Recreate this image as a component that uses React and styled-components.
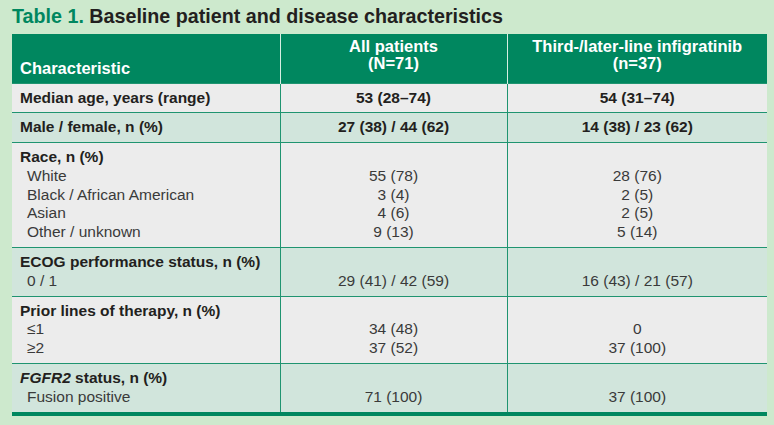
import React from 'react';
import styled, { createGlobalStyle } from 'styled-components';

const GlobalStyle = createGlobalStyle`
  html, body {
    margin: 0;
    padding: 0;
    background: #cde9cd;
  }
  body {
    font-family: "Liberation Sans", Arial, Helvetica, sans-serif;
  }
`;

const rows = [
  { label: 'Median age, years (range)', all: '53 (28–74)', third: '54 (31–74)', bold: true, tint: 'gray' },
  { label: 'Male / female, n (%)', all: '27 (38) / 44 (62)', third: '14 (38) / 23 (62)', bold: true, tint: 'green' },
  {
    label: 'Race, n (%)',
    tint: 'gray',
    items: [
      ['White', '55 (78)', '28 (76)'],
      ['Black / African American', '3 (4)', '2 (5)'],
      ['Asian', '4 (6)', '2 (5)'],
      ['Other / unknown', '9 (13)', '5 (14)'],
    ],
  },
  {
    label: 'ECOG performance status, n (%)',
    tint: 'green',
    items: [['0 / 1', '29 (41) / 42 (59)', '16 (43) / 21 (57)']],
  },
  {
    label: 'Prior lines of therapy, n (%)',
    tint: 'gray',
    items: [
      ['≤1', '34 (48)', '0'],
      ['≥2', '37 (52)', '37 (100)'],
    ],
  },
  {
    label: (
      <>
        <em>FGFR2</em> status, n (%)
      </>
    ),
    tint: 'green',
    items: [['Fusion positive', '71 (100)', '37 (100)']],
  },
];

const Values = ({ row, col }) =>
  row.items ? (
    <>
      <Spacer />
      {row.items.map((it) => (
        <Line key={it[0]}>{it[col]}</Line>
      ))}
    </>
  ) : (
    <Line $bold={row.bold}>{col === 1 ? row.all : row.third}</Line>
  );

const App = () => {
  return (
    <Page>
      <GlobalStyle />
      <Title>
        <TitleLead>Table 1.</TitleLead> Baseline patient and disease characteristics
      </Title>
      <Table>
        <colgroup>
          <col style={{ width: 268 }} />
          <col style={{ width: 227 }} />
          <col style={{ width: 260 }} />
        </colgroup>
        <thead>
          <tr>
            <HeadCell $first>Characteristic</HeadCell>
            <HeadCell>
              All patients
              <br />
              (N=71)
            </HeadCell>
            <HeadCell>
              Third-/later-line infigratinib
              <br />
              (n=37)
            </HeadCell>
          </tr>
        </thead>
        <tbody>
          {rows.map((row, i) => (
            <Row key={i} $tint={row.tint}>
              <LabelCell>
                <Heading>{row.label}</Heading>
                {row.items &&
                  row.items.map((it) => <SubItem key={it[0]}>{it[0]}</SubItem>)}
              </LabelCell>
              <ValueCell>
                <Values row={row} col={1} />
              </ValueCell>
              <ValueCell>
                <Values row={row} col={2} />
              </ValueCell>
            </Row>
          ))}
        </tbody>
      </Table>
    </Page>
  );
};

export default App;

const Page = styled.div`
  width: 774px;
  height: 425px;
  box-sizing: border-box;
  padding: 5px 7px 0 12px;
  overflow: hidden;
`;

const Title = styled.h1`
  margin: 0 0 6px 0;
  font-size: 19.7px;
  line-height: 23px;
  font-weight: 700;
  color: #231f20;
`;

const TitleLead = styled.span`
  color: #00875f;
`;

const Table = styled.table`
  width: 755px;
  border-collapse: collapse;
  table-layout: fixed;
  border-bottom: 4px solid #00875f;
`;

const HeadCell = styled.th`
  background: #00875f;
  color: #ffffff;
  font-size: 16.5px;
  line-height: 17px;
  font-weight: 700;
  height: 49px;
  box-sizing: border-box;
  vertical-align: bottom;
  text-align: ${(p) => (p.$first ? 'left' : 'center')};
  padding: ${(p) => (p.$first ? '0 8px 6px 8px' : '0 8px 11px 8px')};
  border-left: ${(p) => (p.$first ? 'none' : '1px solid #d6eee2')};
`;

const Row = styled.tr`
  background: ${(p) => (p.$tint === 'green' ? '#d1e5dc' : '#ececec')};
  border-top: 1px solid #1f9470;
`;

const LabelCell = styled.td`
  vertical-align: top;
  padding: 5px 8px;
  font-size: 15.5px;
  line-height: 18.8px;
`;

const ValueCell = styled.td`
  vertical-align: top;
  text-align: center;
  padding: 5px 8px;
  font-size: 15.5px;
  line-height: 18.8px;
  border-left: 1px solid #1f9470;
`;

const Heading = styled.div`
  font-weight: 700;
  color: #231f20;
`;

const SubItem = styled.div`
  padding-left: 7px;
  color: #3a3a3a;
`;

const Spacer = styled.div`
  height: 18.8px;
`;

const Line = styled.div`
  color: ${(p) => (p.$bold ? '#231f20' : '#3a3a3a')};
  font-weight: ${(p) => (p.$bold ? 700 : 400)};
`;
